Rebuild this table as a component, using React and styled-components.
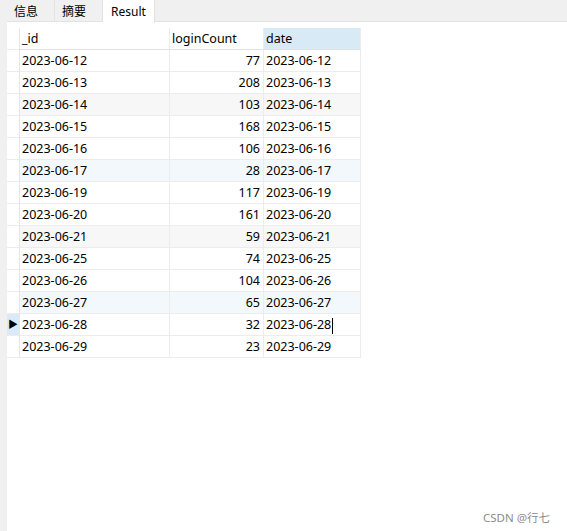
import React from "react";
import styled, { createGlobalStyle } from "styled-components";

const GlobalStyle = createGlobalStyle`
  html, body {
    margin: 0;
    padding: 0;
    background: #fff;
  }
  body {
    font-family: "Noto Sans", "Noto Sans CJK SC", sans-serif;
    font-size: 12.5px;
    color: #000;
  }
`;

const rows = [
  ["2023-06-12", 77, ""],
  ["2023-06-13", 208, ""],
  ["2023-06-14", 103, "gray"],
  ["2023-06-15", 168, ""],
  ["2023-06-16", 106, ""],
  ["2023-06-17", 28, "blue"],
  ["2023-06-19", 117, ""],
  ["2023-06-20", 161, ""],
  ["2023-06-21", 59, "gray"],
  ["2023-06-25", 74, ""],
  ["2023-06-26", 104, ""],
  ["2023-06-27", 65, "blue"],
  ["2023-06-28", 32, ""],
  ["2023-06-29", 23, ""],
];

const tints = { gray: "#f7f7f7", blue: "#f3f8fc", "": "#fff" };

const App = () => {
  return (
    <Page>
      <GlobalStyle />
      <Side />
      <Main>
        <TabBar>
          <Tab>信息</Tab>
          <Tab>摘要</Tab>
          <Tab active>Result</Tab>
        </TabBar>
        <Grid>
          <Row>
            <Marker />
            <HeadCell w={150}>_id</HeadCell>
            <HeadCell w={94}>loginCount</HeadCell>
            <HeadCell w={97} selected>date</HeadCell>
          </Row>
          {rows.map(([d, n, tint], i) => (
            <Row key={d} bg={tints[tint]}>
              <Marker current={i === 12}>{i === 12 ? "▶" : ""}</Marker>
              <Cell w={150}>{d}</Cell>
              <Cell w={94} right>{n}</Cell>
              <Cell w={97}>
                {d}
                {i === 12 && <Caret />}
              </Cell>
            </Row>
          ))}
        </Grid>
      </Main>
      <Watermark>CSDN @行七</Watermark>
    </Page>
  );
};

const Page = styled.div`
  position: relative;
  display: flex;
  width: 567px;
  height: 531px;
  overflow: hidden;
`;

const Side = styled.div`
  width: 7px;
  flex: none;
  background: #f0f0f0;
`;

const Main = styled.div`
  flex: 1;
  display: flex;
  flex-direction: column;
`;

const TabBar = styled.div`
  display: flex;
  height: 22px;
  background: #f0f0f0;
  border-bottom: 1px solid #e3e3e3;
  box-sizing: border-box;
`;

const Tab = styled.div`
  display: flex;
  align-items: center;
  justify-content: ${(p) => (p.active ? "center" : "flex-start")};
  padding-left: ${(p) => (p.active ? "0" : "7px")};
  box-sizing: border-box;
  background: ${(p) => (p.active ? "#fff" : "#f0f0f0")};
  border-right: 1px solid #e3e3e3;
  height: ${(p) => (p.active ? "23px" : "21px")};
  width: ${(p) => (p.active ? "52px" : "48px")};
  font-size: 12px;
`;

const Grid = styled.div`
  display: flex;
  flex-direction: column;
  align-items: flex-start;
  margin-top: 6px;
`;

const Row = styled.div`
  display: flex;
  height: 22px;
  background: ${(p) => p.bg || "#fff"};
`;

const Marker = styled.div`
  width: 13px;
  flex: none;
  box-sizing: border-box;
  border-right: 1px solid #e6e6e6;
  border-bottom: 1px solid #ececec;
  background: ${(p) => (p.current ? "#dbeaf8" : "#fff")};
  font-size: 10px;
  line-height: 21px;
  text-align: center;
`;

const Cell = styled.div`
  position: relative;
  width: ${(p) => p.w}px;
  flex: none;
  box-sizing: border-box;
  border-right: 1px solid #ececec;
  border-bottom: 1px solid #ececec;
  padding: 0 3px 0 2px;
  line-height: 21px;
  text-align: ${(p) => (p.right ? "right" : "left")};
  white-space: nowrap;
`;

const HeadCell = styled(Cell)`
  background: ${(p) => (p.selected ? "#d9eaf7" : "#fff")};
  border-bottom-color: #e2e2e2;
`;

const Caret = styled.span`
  display: inline-block;
  width: 1px;
  height: 16px;
  background: #000;
  vertical-align: middle;
  margin-left: 1px;
`;

const Watermark = styled.div`
  position: absolute;
  right: 17px;
  bottom: 6px;
  font-size: 11.5px;
  color: #8c8c8c;
`;

export default App;
